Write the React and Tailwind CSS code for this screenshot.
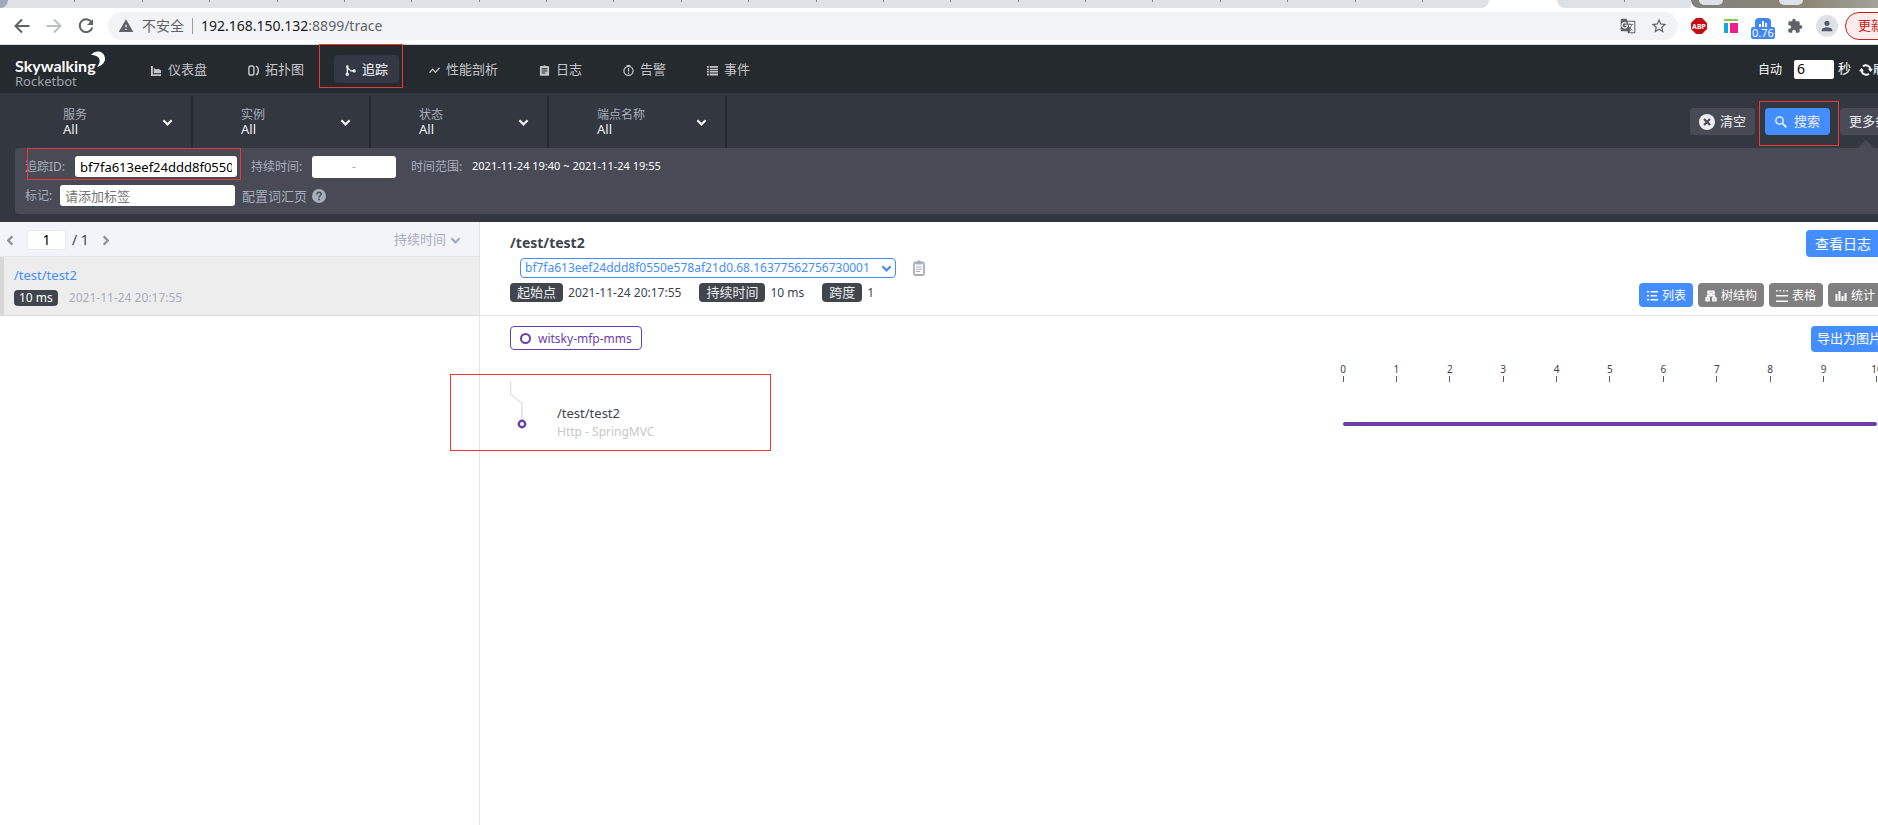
import { useState } from "react";
import { MdGTranslate, MdStarBorder, MdExtension, MdPerson, MdWarning } from "react-icons/md";

const NAV = [
  { name: "仪表盘", icon: "chart" },
  { name: "拓扑图", icon: "topology" },
  { name: "追踪", icon: "trace", active: true },
  { name: "性能剖析", icon: "profile" },
  { name: "日志", icon: "log" },
  { name: "告警", icon: "alarm" },
  { name: "事件", icon: "event" },
];

const FILTERS = ["服务", "实例", "状态", "端点名称"];

const VIEWS = [
  { name: "列表", icon: "list" },
  { name: "树结构", icon: "tree" },
  { name: "表格", icon: "table" },
  { name: "统计", icon: "stats" },
];

const TABS = Array.from({ length: 21 });
const TICKS = [0, 1, 2, 3, 4, 5, 6, 7, 8, 9, 10];
const TRACE_ID = "bf7fa613eef24ddd8f0550e578af21d0.68.16377562756730001";

const Icon = ({ name, className = "" }) => {
  const shapes = {
    chart: (
      <>
        <path d="M1 1v10h10" fill="none" stroke="currentColor" strokeWidth="2" />
        <path d="M3 9V3l2.5 2L8 4l3 2v3z" fill="currentColor" />
      </>
    ),
    topology: (
      <g fill="none" stroke="currentColor" strokeWidth="1.6">
        <rect x="1" y="1" width="5.4" height="10" rx="2" />
        <path d="M8.6 1.2c3.600 1 3.600 8.600 0 9.600" />
      </g>
    ),
    trace: (
      <g fill="none" stroke="currentColor" strokeWidth="1.3">
        <path d="M2.5 2v8M2.5 3l4 3.5H9" />
        <circle cx="2.5" cy="10.2" r="1.2" />
        <circle cx="10" cy="6.5" r="1.1" />
        <circle cx="2.5" cy="1.8" r="0.8" />
      </g>
    ),
    profile: <path d="M0.5 8.5L4 4.5l3 3.5 4.5-5" fill="none" stroke="currentColor" strokeWidth="1.4" />,
    log: (
      <path
        fillRule="evenodd"
        fill="currentColor"
        d="M2 1.2h2.6a1.5 1.5 0 0 1 2.8 0H10q1 0 1 1v8.6q0 1-1 1H2q-1 0-1-1V2.2q0-1 1-1zM3 3.6v1.2h6V3.6zM3 6v1.1h6V6zM3 8.3v1.1h4V8.3z"
      />
    ),
    alarm: (
      <g fill="none" stroke="currentColor" strokeWidth="1.4">
        <circle cx="6" cy="6.4" r="5" />
        <path d="M6 3.4v3.8M6 8.2v1.3M4 0.700h4" />
      </g>
    ),
    event: (
      <path
        d="M0 1h2v2H0zM3 1h9v2H3zM0 4h2v1.6H0zM3 4h9v1.6H3zM0 6.6h2v1.6H0zM3 6.6h9v1.6H3zM0 9.4h2v2H0zM3 9.4h9v2H3z"
        fill="currentColor"
      />
    ),
    list: (
      <path
        d="M1 1h2v1.6H1zM4.5 1H12v1.5H4.5zM1 5h2v1.6H1zM4.5 5H11v1.5H4.5zM1 9h2v1.6H1zM4.5 9H12v1.5H4.5z"
        fill="currentColor"
      />
    ),
    tree: (
      <g fill="none" stroke="currentColor" strokeWidth="1.7">
        <rect x="3.200" y="1.400" width="5.600" height="2.200" />
        <path d="M6 3.5v2M2.7 8V5.6h6.6V8" />
        <rect x="1.2" y="8" width="2.8" height="2.6" />
        <rect x="8" y="8" width="2.8" height="2.6" />
      </g>
    ),
    table: (
      <path
        d="M0 0h1.6v1.5H0zM3.4 0H5v1.5H3.4zM7 0h1.6v1.5H7zM10.4 0H12v1.5h-1.6zM0 5h12v1.6H0zM0 10.400h12V12H0z"
        fill="currentColor"
      />
    ),
    stats: <path d="M0.5 4h2v7h-2zM3.5 1h2v10h-2zM6.5 6h2v5h-2zM9.5 3h2v8h-2z" fill="currentColor" />,
  };

  return (
    <svg viewBox="0 0 12 12" className={`shrink-0 overflow-visible ${className}`} aria-hidden="true">
      {shapes[name]}
    </svg>
  );
};

const Chevron = ({ dir = "down", className = "" }) => {
  const paths = {
    down: "M1.5 3.5L6 8l4.5-4.5",
    left: "M8 1.5L3.5 6 8 10.5",
    right: "M4 1.5L8.5 6 4 10.5",
  };

  return (
    <svg viewBox="0 0 12 12" className={`shrink-0 ${className}`} aria-hidden="true">
      <path d={paths[dir]} fill="none" stroke="currentColor" strokeWidth="2.4" />
    </svg>
  );
};

// Red frame that marks the element it sits in
const Mark = ({ className }) => (
  <span className={`pointer-events-none absolute z-20 border border-[#f43535] ${className}`} />
);

const Browser = () => (
  <div className="bg-white">
    {/* Tab strip */}
    <div className="flex h-2 overflow-hidden bg-white">
      <div className="flex h-2 w-[1489px] shrink-0 rounded-br-lg bg-[#dee1e6]">
        <div className="h-2 w-2 shrink-0 rounded-br-lg bg-[#a3a9b8]" />
        <div className="flex w-[1415px]">
          {TABS.map((_, i) => (
            <div key={i} className="h-[2px] flex-1 border-r border-[#80868b]" />
          ))}
        </div>
      </div>
      <div className="ml-[68px] flex h-2 w-[134px] shrink-0 justify-center rounded-bl-lg bg-[#dee1e6]">
        <div className="h-[2px] w-px bg-[#80868b]" />
      </div>
      <div className="flex h-2 flex-1 gap-14 rounded-bl-lg bg-linear-to-r from-[#808080] via-[#8c8773] to-[#b0b0b0] pl-2">
        <div className="h-[5px] w-6 rounded-b-full bg-[#dee1e6]" />
        <div className="h-[5px] w-6 rounded-b-full bg-[#dee1e6]" />
      </div>
    </div>

    {/* Address bar */}
    <div className="flex h-[37px] items-center border-b border-[#d5d7da] pl-[14px]">
      <div className="flex items-center gap-4 text-[#5f6368]">
        <button aria-label="Back">
          <svg viewBox="0 0 16 16" className="size-4">
            <path d="M15.5 8H2M8 1.5L1.5 8 8 14.5" fill="none" stroke="currentColor" strokeWidth="2" />
          </svg>
        </button>
        <button aria-label="Forward" className="text-[#bdc0c3]">
          <svg viewBox="0 0 16 16" className="size-4">
            <path d="M0.5 8H14M8 1.5L14.5 8 8 14.5" fill="none" stroke="currentColor" strokeWidth="2" />
          </svg>
        </button>
        <button aria-label="Reload">
          <svg viewBox="0 0 16 16" className="size-4">
            <path d="M13.4 4A6.4 6.4 0 1 0 14.3 9.5" fill="none" stroke="currentColor" strokeWidth="2" />
            <path d="M15 1v6H9z" fill="currentColor" />
          </svg>
        </button>
      </div>
      <div className="ml-[14px] flex h-7 flex-1 items-center rounded-full bg-[#f1f3f4] px-[10px]">
        <MdWarning className="size-4 text-[#5f6368]" />
        <span className="ml-2 text-sm text-[#5f6368]">不安全</span>
        <span className="mx-2 h-4 w-px bg-[#9aa0a6]" />
        <span className="text-sm text-[#5f6368]">
          <span className="text-[#202124]">192.168.150.132</span>:8899/trace
        </span>
        <div className="ml-auto flex items-center gap-[14px] text-[#5f6368]">
          <MdGTranslate className="size-4" />
          <MdStarBorder className="size-[18px]" />
        </div>
      </div>
      <div className="flex items-center pl-[13px]">
        <svg viewBox="0 0 16 16" className="size-4">
          <path d="M5 0h6l5 5v6l-5 5H5l-5-5V5z" fill="#c70d12" />
          <text x="8" y="10.6" textAnchor="middle" fontSize="7" fontWeight="700" fill="#fff">
            ABP
          </text>
        </svg>
        <svg viewBox="0 0 14 14" className="ml-[17px] size-[14px]">
          <path d="M0 0h14v2H0z" fill="#8cc63f" />
          <path d="M0 4h4v10H0z" fill="#16a5dc" />
          <path d="M6 4h8v10H6z" fill="#ee1e8c" />
        </svg>
        <div className="relative ml-[17px] size-4 rounded-sm bg-[#4285f4]">
          <svg viewBox="0 0 16 16" className="size-4">
            <path d="M4 6h2v4H4zM7 3h2v7H7zM10 5h2v5h-2z" fill="#fff" />
          </svg>
          <span className="absolute -left-1 top-[9px] w-6 rounded-xs bg-[#4285f4] text-center text-[11px] leading-3 text-white">
            0.76
          </span>
        </div>
        <MdExtension className="ml-4 size-4 text-[#5f6368]" />
        <div className="ml-[13px] flex size-[22px] items-center justify-center rounded-full bg-[#dee1e6]">
          <MdPerson className="size-4 text-[#525c70]" />
        </div>
        <button className="ml-[7px] h-7 w-[75px] rounded-l-full border border-[#c5221f] bg-[#fdecec] pl-3 text-left text-[13px] text-[#c5221f]">
          更新
        </button>
      </div>
    </div>
  </div>
);

const Header = () => {
  const [seconds, setSeconds] = useState("6");

  return (
    <header className="flex h-12 items-center bg-[#252a2f] pl-[15px]">
      <div className="relative w-[125px] pt-2 text-white">
        <div className="font-['Lato',sans-serif] text-base font-bold leading-[17px]">Skywalking</div>
        <div className="text-[13px] leading-[15px] text-[#9da3aa]">Rocketbot</div>
        <svg viewBox="0 0 16 16" className="absolute left-[75px] top-0.5 size-4">
          <path d="M1 4C6-2 15 0 15 8c0 4-4 7-8 8C12 10 10 4 1 4z" fill="#fff" />
        </svg>
      </div>
      <nav className="flex gap-[19px]">
        {NAV.map((item) => (
          <a
            key={item.name}
            href="#trace"
            className={
              item.active
                ? "relative flex h-7 items-center gap-1.5 rounded bg-[#333844] px-[11px] pt-0.5 text-[13px] text-white"
                : "flex h-7 items-center gap-1.5 px-[11px] pt-0.5 text-[13px] text-[#c3c5c8]"
            }
          >
            <Icon name={item.icon} className="size-[11px]" />
            {item.name}
            {item.active && <Mark className="-bottom-[5px] -left-[15px] -right-1 -top-[11px]" />}
          </a>
        ))}
      </nav>
      <div className="ml-auto flex w-[162px] items-center text-xs text-white">
        <label htmlFor="seconds" className="pt-0.5">
          自动
        </label>
        <input
          id="seconds"
          value={seconds}
          onChange={(e) => setSeconds(e.target.value)}
          className="ml-3 h-[19px] w-10 rounded-xs bg-white px-[3px] text-sm text-black"
        />
        <span className="ml-1 text-[13px]">秒</span>
        <button className="ml-2 flex items-center whitespace-nowrap pt-0.5">
          <svg viewBox="0 0 14 14" className="size-[14px]">
            <path
              d="M2.500 8A4.700 4.700 0 0 0 10 10.700M11.500 6A4.700 4.700 0 0 0 4 3.300"
              fill="none"
              stroke="#fff"
              strokeWidth="1.8"
            />
            <path d="M0 8.200h5L2.500 5zM14 5.800H9L11.500 9z" fill="#fff" />
          </svg>
          刷新
        </button>
      </div>
    </header>
  );
};

const SearchPanel = () => {
  const [traceId, setTraceId] = useState(TRACE_ID);

  return (
    <section className="bg-[#333840] pb-2 pl-[15px] text-xs">
      <div className="flex h-[55px]">
        {FILTERS.map((name) => (
          <button
            key={name}
            className="mt-[3px] flex w-[178px] items-center border-r-2 border-[#252a2f] pl-12 pr-[18px] text-left"
          >
            <span className="flex-1">
              <span className="block leading-[15px] text-[#a7aebb]">{name}</span>
              <span className="block text-[13px] leading-[15px] text-[#efeff1]">All</span>
            </span>
            <Chevron className="size-[11px] text-[#efeff1]" />
          </button>
        ))}
        <div className="ml-auto flex w-[230px] items-center pt-0.5 text-[13px] text-[#efeff1]">
          <button className="flex h-[27px] w-[65px] items-center justify-center gap-[5px] rounded bg-[#484b55]">
            <svg viewBox="0 0 16 16" className="size-4">
              <circle cx="8" cy="8" r="8" fill="#efeff1" />
              <path d="M5 5l6 6M11 5l-6 6" stroke="#484b55" strokeWidth="2.200" />
            </svg>
            清空
          </button>
          <div className="relative ml-[10px]">
            <button className="flex h-[27px] w-[65px] items-center justify-center gap-[7px] rounded bg-[#448dfe]">
              <svg viewBox="0 0 12 12" className="size-3">
                <circle cx="4.500" cy="4.500" r="3.700" fill="none" stroke="#fff" strokeWidth="1.300" />
                <path d="M7.400 7.400l4 4" stroke="#fff" strokeWidth="1.500" />
              </svg>
              搜索
            </button>
            <Mark className="-bottom-[11px] -left-1.5 -right-[9px] -top-[7px]" />
          </div>
          <div className="relative ml-[10px]">
            <button className="h-[27px] w-[78px] whitespace-nowrap rounded bg-[#484b55] pl-[9px] text-left">
              更多条件
            </button>
            <span className="absolute left-[18px] top-8 border-x-8 border-b-8 border-x-transparent border-b-[#484b56]" />
          </div>
        </div>
      </div>

      <div className="flex flex-col gap-2 rounded-l bg-[#484b56] py-2 pl-[10px] text-[#a7aebb]">
        <div className="flex h-[21px] items-center">
          <div className="relative flex items-center">
            <label htmlFor="trace-id" className="w-[50px]">
              追踪ID:
            </label>
            <input
              id="trace-id"
              value={traceId}
              onChange={(e) => setTraceId(e.target.value)}
              className="h-[21px] w-[162px] rounded-[3px] bg-white px-[5px] text-[13px] text-black"
            />
            <Mark className="-bottom-[3px] -right-1 -top-2 left-0.5" />
          </div>
          <label htmlFor="duration" className="ml-[14px] w-[61px]">
            持续时间:
          </label>
          <div className="flex h-[22px] w-[84px] items-center justify-center rounded-[3px] bg-white">
            <input id="duration" className="h-5 w-8 text-center text-black outline-none" />
            <span>-</span>
            <input aria-label="最大持续时间" className="h-5 w-8 text-center text-black outline-none" />
          </div>
          <span className="ml-[15px] w-[61px]">时间范围:</span>
          <span className="text-[11px] text-white">2021-11-24 19:40 ~ 2021-11-24 19:55</span>
        </div>
        <div className="flex h-[21px] items-center">
          <label htmlFor="tag" className="w-[35px]">
            标记:
          </label>
          <input
            id="tag"
            placeholder="请添加标签"
            className="h-[21px] w-[175px] rounded-[3px] bg-white px-[5px] text-[13px] placeholder:text-[#757575]"
          />
          <a href="#tags" className="ml-[7px] flex items-center gap-[5px] pt-0.5 text-[13px]">
            配置词汇页
            <svg viewBox="0 0 14 14" className="size-[14px]">
              <circle cx="7" cy="7" r="7" fill="#a7aebb" />
              <path
                d="M4.800 5.400C4.800 2.600 9.300 2.700 9.200 5.300 9.100 6.800 7 6.800 7 8.500"
                fill="none"
                stroke="#484b56"
                strokeWidth="1.500"
              />
              <circle cx="7" cy="10.600" r="1" fill="#484b56" />
            </svg>
          </a>
        </div>
      </div>
    </section>
  );
};

const TraceList = () => {
  const [page, setPage] = useState("1");

  return (
    <aside className="w-1/4 shrink-0 border-r border-[#e3e4e8]">
      <div className="flex h-[35px] items-center border-b border-[#e3e5e9] bg-[#f3f4f9] pl-[5px] pr-[18px] pt-0.5 text-[13px]">
        <button aria-label="上一页">
          <Chevron dir="left" className="size-[11px] text-[#8c9098]" />
        </button>
        <input
          aria-label="页码"
          value={page}
          onChange={(e) => setPage(e.target.value)}
          className="ml-[11px] h-5 w-[39px] rounded-[3px] border border-[#e8eaef] bg-white text-center text-sm text-black"
        />
        <span className="ml-[6px] text-sm text-[#3d444f]">/ 1</span>
        <button aria-label="下一页" className="ml-[11px]">
          <Chevron dir="right" className="size-[11px] text-[#8c9098]" />
        </button>
        <button className="ml-auto flex items-center gap-1 text-[#a7aebb]">
          持续时间
          <Chevron className="size-[11px]" />
        </button>
      </div>
      <div className="h-[59px] border-b border-l-4 border-b-[#dadada] border-l-[#d8d8d8] bg-[#ededed] pl-[10px] pt-[9px]">
        <a href="#trace" className="block text-[13px] leading-[18px] text-[#448dfe]">
          /test/test2
        </a>
        <div className="mt-1.5 flex items-center gap-[11px] text-xs leading-4">
          <span className="rounded bg-[#40454e] px-[5px] text-white">10 ms</span>
          <span className="text-[#a7aebb]">2021-11-24 20:17:55</span>
        </div>
      </div>
    </aside>
  );
};

const Fact = ({ label, value }) => (
  <div className="flex items-center gap-[5px]">
    <span className="rounded bg-[#40454e] px-[7px] text-[13px] leading-[19px] text-[#eeeeee]">{label}</span>
    <span className="text-xs text-[#3d444f]">{value}</span>
  </div>
);

const TraceDetail = () => (
  <main className="flex-1">
    <div className="relative h-[94px] border-b border-[#e3e3e3] pl-[30px] pt-[11px]">
      <h1 className="text-sm font-bold leading-5 text-[#3d444f]">/test/test2</h1>
      <div className="ml-[10px] mt-[5px] flex h-5 items-center">
        <div className="relative">
          <select
            aria-label="追踪ID"
            className="block h-5 w-[376px] appearance-none rounded border border-[#448dfe] bg-white px-1 text-xs leading-4 text-[#448dfe]"
          >
            <option>{TRACE_ID}</option>
          </select>
          <Chevron className="pointer-events-none absolute right-1 top-[5px] size-[11px] text-[#448dfe]" />
        </div>
        <button aria-label="复制" className="ml-[17px]">
          <svg viewBox="0 0 12 16" className="h-4 w-3">
            <rect x="1" y="2.500" width="10" height="12.500" rx="1.500" fill="none" stroke="#a7aebb" strokeWidth="1.800" />
            <path d="M3 1.500h1.500L6 0l1.500 1.500H9v3H3z" fill="#a7aebb" />
            <path d="M3 7h6M3 9.200h6M3 11.500h4" stroke="#a7aebb" strokeWidth="1.100" />
          </svg>
        </button>
      </div>
      <div className="mt-[5px] flex gap-[18px]">
        <Fact label="起始点" value="2021-11-24 20:17:55" />
        <Fact label="持续时间" value="10 ms" />
        <Fact label="跨度" value="1" />
      </div>
      <button className="absolute right-[30px] top-2 h-[27px] w-[84px] rounded bg-[#448dfe] pl-[9px] text-left text-sm text-white">
        查看日志
      </button>
      <div className="absolute right-[38px] top-[61px] flex gap-[5px] text-xs text-white">
        {VIEWS.map((view, i) => (
          <button
            key={view.name}
            className={
              i === 0
                ? "flex h-6 items-center gap-1 rounded bg-[#448dfe] px-[7px] pt-px"
                : "flex h-6 items-center gap-1 rounded bg-[#808080] px-[7px] pt-px"
            }
          >
            <Icon name={view.icon} className="size-3" />
            {view.name}
          </button>
        ))}
      </div>
    </div>

    <div className="flex items-start justify-between pl-[30px] pr-[25px] pt-[10px]">
      <div className="flex h-6 items-center gap-[7px] rounded border border-[#6b3fa9] px-[9px] pt-px text-[13px] text-[#6b3fa9]">
        <span className="size-[11px] rounded-full border-2 border-[#6b3fa9]" />
        <span className="text-xs">witsky-mfp-mms</span>
      </div>
      <button className="h-[26px] w-[84px] whitespace-nowrap rounded bg-[#448dfe] pl-[6px] text-left text-[13px] text-white">
        导出为图片
      </button>
    </div>

    <div className="flex justify-between pl-[30px] pr-[43px] pt-[10px]">
      <div className="relative flex pt-[18px]">
        <svg viewBox="0 0 47 50" className="h-[50px] w-[47px]">
          <path d="M0.500 1v13l11.500 9.500V40" fill="none" stroke="#e0e0e0" strokeWidth="1.500" />
          <circle cx="12" cy="44" r="3.200" fill="#fff" stroke="#6b3fa9" strokeWidth="2.400" />
        </svg>
        <div className="pt-6">
          <div className="text-[13px] leading-[18px] text-[#3d444f]">/test/test2</div>
          <div className="text-xs leading-5 text-[#c8c8c8]">Http - SpringMVC</div>
        </div>
        <Mark className="-left-[60px] top-3 h-[77px] w-[321px]" />
      </div>
      <div className="w-[534px]">
        <div className="flex justify-between">
          {TICKS.map((tick) => (
            <div key={tick} className="flex w-0 flex-col items-center text-[10px] leading-[14px] text-[#3d444f]">
              {tick}
              <span className="h-1.5 w-px bg-[#5a606a]" />
            </div>
          ))}
        </div>
        <div className="mt-10 h-1 rounded-full bg-[#6b3fa9]" />
      </div>
    </div>
  </main>
);

export default function App() {
  return (
    <div className="min-h-screen overflow-hidden bg-white font-['Noto_Sans','Noto_Sans_CJK_SC',sans-serif]">
      {/* The page runs a little past the right edge of the window */}
      <div className="flex min-h-screen w-[calc(100%+42px)] flex-col">
        <Browser />
        <Header />
        <SearchPanel />
        <div className="flex flex-1">
          <TraceList />
          <TraceDetail />
        </div>
      </div>
    </div>
  );
}
